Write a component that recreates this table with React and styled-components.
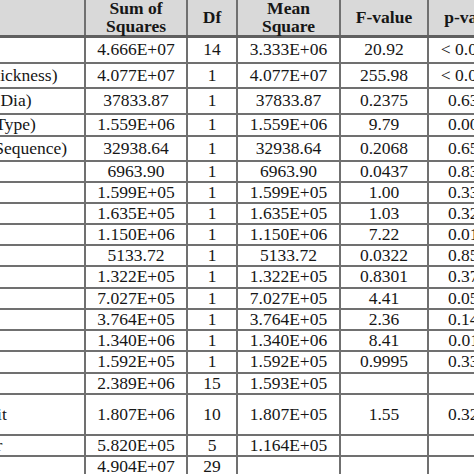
import React from "react";
import styled, { createGlobalStyle } from "styled-components";

const GlobalStyle = createGlobalStyle`
  html, body {
    margin: 0;
    padding: 0;
    background: #ffffff;
    overflow: hidden;
  }
  body {
    width: 474px;
    height: 474px;
  }
`;

const Frame = styled.div`
  width: 474px;
  height: 474px;
  overflow: hidden;
`;

const Table = styled.table`
  border-collapse: collapse;
  width: 590px;
  margin-left: -75px;
  margin-top: -3px;
  table-layout: fixed;
  font-family: "Liberation Serif", "Times New Roman", Times, serif;
  font-size: 17.5px;
  color: #161616;
`;

const Col = styled.col`
  width: ${(p) => p.$w}px;
`;

const HeadCell = styled.th`
  background: #d9d9d9;
  font-weight: bold;
  line-height: 18px;
  height: 36px;
  padding: 0 4px;
  text-align: ${(p) => (p.$left ? "left" : "center")};
  padding-left: ${(p) => (p.$left ? "2px" : "4px")};
  border: 2px solid #707070;
  border-bottom: 3px solid #606060;
`;

const Row = styled.tr`
  height: ${(p) => p.$h}px;
`;

const Cell = styled.td`
  padding: 0 4px;
  text-align: center;
  vertical-align: middle;
  line-height: 19px;
  border: 2px solid #707070;
  white-space: nowrap;
  overflow: hidden;
`;

const Label = styled(Cell)`
  text-align: left;
  padding-left: 2px;
`;

const rows = [
  ["Model", "4.666E+07", "14", "3.333E+06", "20.92", "< 0.0001", 26],
  ["A-(Ply Thickness)", "4.077E+07", "1", "4.077E+07", "255.98", "< 0.0001", 25],
  ["B-(Punch Dia)", "37833.87", "1", "37833.87", "0.2375", "0.6330", 26],
  ["C-(Sheet Type)", "1.559E+06", "1", "1.559E+06", "9.79", "0.0069", 22],
  ["D-(Weld Sequence)", "32938.64", "1", "32938.64", "0.2068", "0.6558", 25],
  ["AB", "6963.90", "1", "6963.90", "0.0437", "0.8372", 21],
  ["AC", "1.599E+05", "1", "1.599E+05", "1.00", "0.3325", 21],
  ["AD", "1.635E+05", "1", "1.635E+05", "1.03", "0.3271", 21],
  ["BC", "1.150E+06", "1", "1.150E+06", "7.22", "0.0169", 21],
  ["BD", "5133.72", "1", "5133.72", "0.0322", "0.8599", 21],
  ["CD", "1.322E+05", "1", "1.322E+05", "0.8301", "0.3766", 22],
  ["A²", "7.027E+05", "1", "7.027E+05", "4.41", "0.0530", 21],
  ["B²", "3.764E+05", "1", "3.764E+05", "2.36", "0.1452", 20],
  ["C²", "1.340E+06", "1", "1.340E+06", "8.41", "0.0110", 21],
  ["D²", "1.592E+05", "1", "1.592E+05", "0.9995", "0.3333", 22],
  ["Residual", "2.389E+06", "15", "1.593E+05", "", "", 21],
  ["Lack of Fit", "1.807E+06", "10", "1.807E+05", "1.55", "0.3279", 41],
  ["Pure Error", "5.820E+05", "5", "1.164E+05", "", "", 21],
  ["Cor Total", "4.904E+07", "29", "", "", "", 22],
];

export default function App() {
  return (
    <Frame>
      <GlobalStyle />
      <Table>
        <colgroup>
          <Col $w={159} />
          <Col $w={102} />
          <Col $w={50} />
          <Col $w={103} />
          <Col $w={88} />
          <Col $w={88} />
        </colgroup>
        <thead>
          <tr>
            <HeadCell $left>Source</HeadCell>
            <HeadCell>
              Sum of
              <br />
              Squares
            </HeadCell>
            <HeadCell>Df</HeadCell>
            <HeadCell>
              Mean
              <br />
              Square
            </HeadCell>
            <HeadCell>F-value</HeadCell>
            <HeadCell>p-value</HeadCell>
          </tr>
        </thead>
        <tbody>
          {rows.map(([src, ss, df, ms, f, p, h]) => (
            <Row key={src} $h={h}>
              <Label>{src}</Label>
              <Cell>{ss}</Cell>
              <Cell>{df}</Cell>
              <Cell>{ms}</Cell>
              <Cell>{f}</Cell>
              <Cell>{p}</Cell>
            </Row>
          ))}
        </tbody>
      </Table>
    </Frame>
  );
}
